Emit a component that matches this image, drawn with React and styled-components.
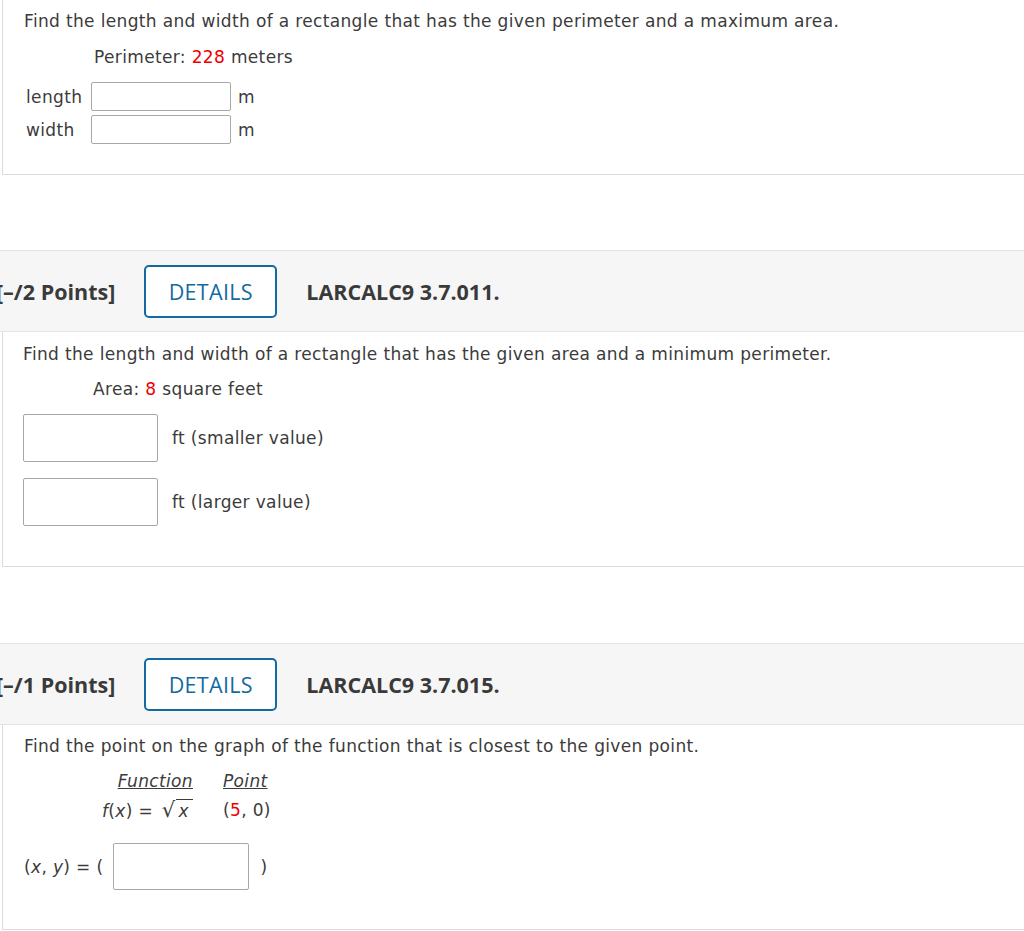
import React from "react";
import styled, { createGlobalStyle } from "styled-components";

const GlobalStyle = createGlobalStyle`
  html, body {
    margin: 0;
    padding: 0;
    background: #ffffff;
    overflow: hidden;
  }
  body {
    font-family: "DejaVu Sans", Verdana, sans-serif;
    color: #3b3b3b;
  }
`;

const Page = styled.div`
  width: 1024px;
  height: 931px;
  overflow: hidden;
`;

const Card = styled.div`
  margin-left: 2px;
  border-left: 1px solid #dcdcdc;
  border-bottom: 1px solid #dcdcdc;
  padding: ${props => props.pad};
  font-size: 17px;
  letter-spacing: 0.35px;
  line-height: 20px;
`;

const Gap = styled.div`
  height: ${props => props.h}px;
`;

const Header = styled.div`
  display: flex;
  align-items: center;
  height: 80px;
  background: #f6f6f6;
  border-top: 1px solid #e4e4e4;
  border-bottom: 1px solid #e4e4e4;
  font-family: "Open Sans", sans-serif;
`;

const PointsLabel = styled.span`
  margin-left: -4px;
  font-size: 21.5px;
  font-weight: 700;
  color: #3a3a3a;
`;

const DetailsButton = styled.button`
  margin-left: 29px;
  width: 133px;
  height: 53px;
  border: 2px solid #136aa1;
  border-radius: 5px;
  background: #ffffff;
  color: #136aa1;
  font-family: "Open Sans", sans-serif;
  font-size: 21.5px;
  font-weight: 500;
  letter-spacing: 0.3px;
  padding: 0;
`;

const ProblemCode = styled.span`
  margin-left: 29px;
  font-size: 21.5px;
  font-weight: 700;
  color: #3a3a3a;
`;

const Prompt = styled.div`
  margin: 0;
`;

const Given = styled.div`
  margin-top: ${props => props.mt}px;
  margin-left: 70px;
`;

const Red = styled.span`
  color: #ee0000;
`;

const FieldRow = styled.div`
  display: flex;
  align-items: center;
  margin-top: ${props => props.mt}px;
`;

const RowLabel = styled.span`
  width: 67px;
  padding-left: 2px;
  box-sizing: border-box;
`;

const Input = styled.div`
  box-sizing: border-box;
  width: ${props => props.w}px;
  height: ${props => props.h}px;
  margin-left: ${props => props.ml || 0}px;
  border: 1px solid #a8a8a8;
  border-radius: 2px;
  background: #ffffff;
`;

const Unit = styled.span`
  margin-left: ${props => props.ml}px;
`;

const Table = styled.div`
  display: grid;
  grid-template-columns: auto auto;
  column-gap: 30px;
  row-gap: 9px;
  margin-top: 15px;
  margin-left: 78px;
  width: max-content;
`;

const ColHead = styled.span`
  font-style: italic;
  text-decoration: underline;
  text-align: ${props => props.align};
`;

const Cell = styled.span`
  text-align: ${props => props.align};
`;

const Var = styled.i`
  font-style: italic;
`;

const Radical = styled.span`
  font-size: 21px;
  margin-left: 3px;
`;

const Radicand = styled.span`
  border-top: 1px solid #3b3b3b;
  padding: 1px 4px 0 3px;
  font-style: italic;
`;

export default function App() {
  return (
    <Page>
      <GlobalStyle />
      <Card pad="11px 0 30px 21px">
        <Prompt>Find the length and width of a rectangle that has the given perimeter and a maximum area.</Prompt>
        <Given mt={16}>
          Perimeter: <Red>228</Red> meters
        </Given>
        <FieldRow mt={15}>
          <RowLabel>length</RowLabel>
          <Input w={140} h={29} />
          <Unit ml={7}>m</Unit>
        </FieldRow>
        <FieldRow mt={4}>
          <RowLabel>width</RowLabel>
          <Input w={140} h={29} />
          <Unit ml={7}>m</Unit>
        </FieldRow>
      </Card>

      <Gap h={75} />
      <Header>
        <PointsLabel>[–/2 Points]</PointsLabel>
        <DetailsButton>DETAILS</DetailsButton>
        <ProblemCode>LARCALC9 3.7.011.</ProblemCode>
      </Header>
      <Card pad="12px 0 40px 20px">
        <Prompt>Find the length and width of a rectangle that has the given area and a minimum perimeter.</Prompt>
        <Given mt={15}>
          Area: <Red>8</Red> square feet
        </Given>
        <FieldRow mt={15}>
          <Input w={135} h={48} />
          <Unit ml={14}>ft (smaller value)</Unit>
        </FieldRow>
        <FieldRow mt={16}>
          <Input w={135} h={48} />
          <Unit ml={14}>ft (larger value)</Unit>
        </FieldRow>
      </Card>

      <Gap h={76} />
      <Header>
        <PointsLabel>[–/1 Points]</PointsLabel>
        <DetailsButton>DETAILS</DetailsButton>
        <ProblemCode>LARCALC9 3.7.015.</ProblemCode>
      </Header>
      <Card pad="11px 0 39px 21px">
        <Prompt>Find the point on the graph of the function that is closest to the given point.</Prompt>
        <Table>
          <ColHead align="right">Function</ColHead>
          <ColHead align="left">Point</ColHead>
          <Cell align="right">
            <Var>f</Var>(<Var>x</Var>) = <Radical>√</Radical><Radicand>x</Radicand>
          </Cell>
          <Cell align="left">
            (<Red>5</Red>, 0)
          </Cell>
        </Table>
        <FieldRow mt={22}>
          <span>
            (<Var>x</Var>, <Var>y</Var>) = (
          </span>
          <Input w={136} h={47} ml={10} />
          <Unit ml={11}>)</Unit>
        </FieldRow>
      </Card>
    </Page>
  );
}
